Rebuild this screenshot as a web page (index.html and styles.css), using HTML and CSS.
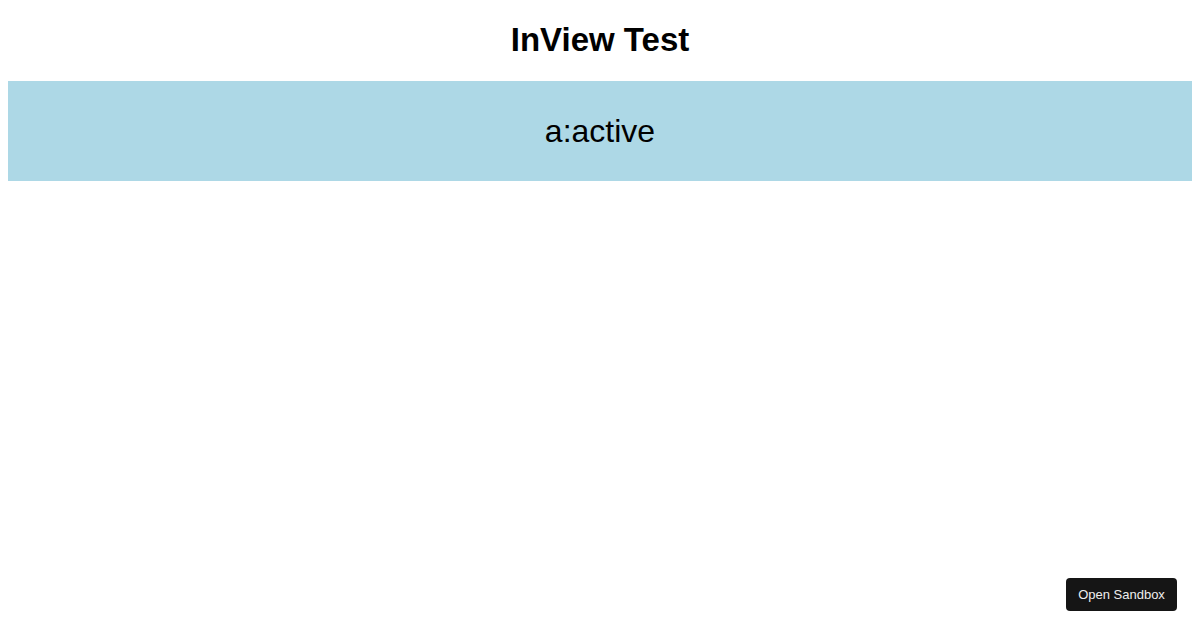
FILE: index.html
```html
<!DOCTYPE html>
<html lang="en">
<head>
<meta charset="UTF-8">
<title>InView Test</title>
<link rel="stylesheet" href="styles.css">
</head>
<body>
<h1>InView Test</h1>
<div class="box">a:active</div>
<a class="sandbox-button" href="#">Open Sandbox</a>
</body>
</html>
```

FILE: styles.css
```css
body {
  font-family: "Liberation Sans", Arial, sans-serif;
  margin: 8px;
  background-color: #fff;
  color: #000;
}
h1 {
  font-size: 33px;
  line-height: 37px;
  margin: 13px 0 23px;
  text-align: center;
}
.box {
  height: 100px;
  background-color: lightblue;
  display: flex;
  align-items: center;
  justify-content: center;
  font-size: 32px;
}
.sandbox-button {
  position: fixed;
  right: 23px;
  bottom: 19px;
  width: 111px;
  height: 33px;
  box-sizing: border-box;
  display: flex;
  align-items: center;
  justify-content: center;
  background-color: #151515;
  color: #eee;
  font-size: 13px;
  text-decoration: none;
  border-radius: 4px;
}
```
